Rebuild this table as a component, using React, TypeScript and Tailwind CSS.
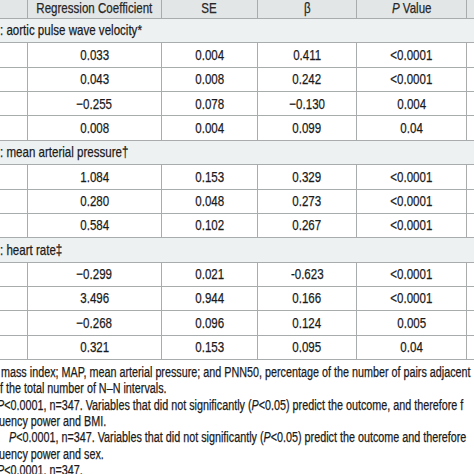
import React from "react";

type Row = { kind: "section"; label: string } | { kind: "data"; coef: string; se: string; beta: string; p: string };

const rows: Row[] = [
  { kind: "section", label: ": aortic pulse wave velocity*" },
  { kind: "data", coef: "0.033", se: "0.004", beta: "0.411", p: "<0.0001" },
  { kind: "data", coef: "0.043", se: "0.008", beta: "0.242", p: "<0.0001" },
  { kind: "data", coef: "\u22120.255", se: "0.078", beta: "\u22120.130", p: "0.004" },
  { kind: "data", coef: "0.008", se: "0.004", beta: "0.099", p: "0.04" },
  { kind: "section", label: ": mean arterial pressure\u2020" },
  { kind: "data", coef: "1.084", se: "0.153", beta: "0.329", p: "<0.0001" },
  { kind: "data", coef: "0.280", se: "0.048", beta: "0.273", p: "<0.0001" },
  { kind: "data", coef: "0.584", se: "0.102", beta: "0.267", p: "<0.0001" },
  { kind: "section", label: ": heart rate\u2021" },
  { kind: "data", coef: "\u22120.299", se: "0.021", beta: "-0.623", p: "<0.0001" },
  { kind: "data", coef: "3.496", se: "0.944", beta: "0.166", p: "<0.0001" },
  { kind: "data", coef: "\u22120.268", se: "0.096", beta: "0.124", p: "0.005" },
  { kind: "data", coef: "0.321", se: "0.153", beta: "0.095", p: "0.04" },
];

const grid = "grid grid-cols-[28px_134px_96px_99px_110px_7px] border-b border-[#a9acac]";
const cell = "flex items-center justify-center border-r border-[#a9acac]";

// condensed text: Liberation Sans squeezed horizontally to match Helvetica Condensed
const N = ({ children, left }: { children: React.ReactNode; left?: boolean }) => (
  <span className={`inline-block whitespace-nowrap scale-x-[0.77] ${left ? "origin-left" : ""}`}>{children}</span>
);

export default function App() {
  return (
    <div
      className="w-[474px] h-[474px] overflow-hidden bg-white text-[#1a1a1a] [-webkit-text-stroke:0.25px_#1a1a1a]"
      style={{ fontFamily: '"Liberation Sans", Arial, sans-serif' }}
    >
      <div className="text-[15px]">
        <div className={`${grid} h-[19px] bg-[#e3e6e7] text-[#2a2a2a] leading-[15px]`}>
          <div className={cell}></div>
          <div className={`${cell} pb-[3px]`}><N>Regression Coefficient</N></div>
          <div className={`${cell} pb-[3px]`}><N>SE</N></div>
          <div className={`${cell} pb-[3px]`}><N>β</N></div>
          <div className={`${cell} pb-[3px]`}>
            <N><i>P</i> Value</N>
          </div>
          <div></div>
        </div>
        {rows.map((r, i) =>
          r.kind === "section" ? (
            <div key={i} className="h-[24.36px] flex items-center bg-[#eef1f2] border-b border-[#a9acac]">
              <N left>{r.label}</N>
            </div>
          ) : (
            <div key={i} className={`${grid} h-[24.36px]`}>
              <div className={cell}></div>
              <div className={cell}><N>{r.coef}</N></div>
              <div className={cell}><N>{r.se}</N></div>
              <div className={cell}><N>{r.beta}</N></div>
              <div className={cell}><N>{r.p}</N></div>
              <div></div>
            </div>
          )
        )}
      </div>
      <div className="pt-[4px] text-[14px] leading-[16.3px]">
        <div className="ml-[1px]">
          <N left>mass index; MAP, mean arterial pressure; and PNN50, percentage of the number of pairs adjacent</N>
        </div>
        <div className="ml-[-6px]">
          <N left>of the total number of N–N intervals.</N>
        </div>
        <div className="ml-[-3px]">
          <N left>
            <i>P</i>&lt;0.0001, n=347. Variables that did not significantly (<i>P</i>&lt;0.05) predict the outcome, and therefore f
          </N>
        </div>
        <div className="ml-[-1px]">
          <N left>uency power and BMI.</N>
        </div>
        <div className="ml-[9px]">
          <N left>
            <i>P</i>&lt;0.0001, n=347. Variables that did not significantly (<i>P</i>&lt;0.05) predict the outcome and therefore
          </N>
        </div>
        <div className="ml-[-1px]">
          <N left>uency power and sex.</N>
        </div>
        <div className="ml-[-3px]">
          <N left>
            <i>P</i>&lt;0.0001, n=347.
          </N>
        </div>
      </div>
    </div>
  );
}
